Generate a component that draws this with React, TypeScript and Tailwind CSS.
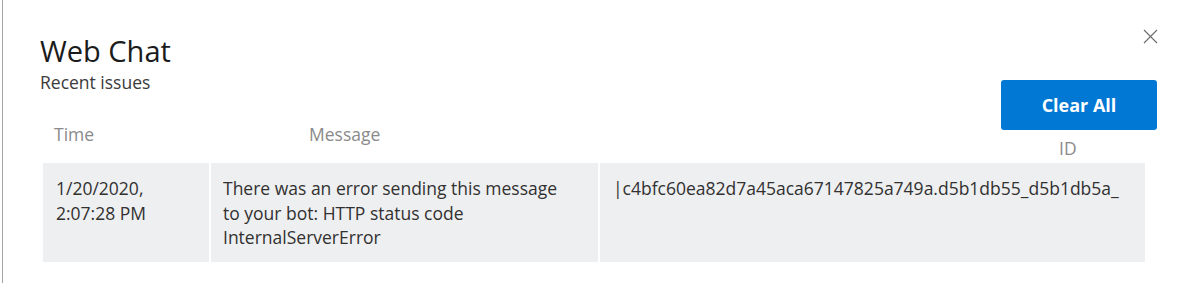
import React from "react";

type Issue = {
  time: string[];
  message: string;
  id: string;
};

const issues: Issue[] = [
  {
    time: ["1/20/2020,", "2:07:28 PM"],
    message:
      "There was an error sending this message to your bot: HTTP status code InternalServerError",
    id: "|c4bfc60ea82d7a45aca67147825a749a.d5b1db55_d5b1db5a_",
  },
];

const CloseIcon: React.FC = () => (
  <svg width="15" height="15" viewBox="0 0 15 15" fill="none">
    <path d="M1 1L14 14M14 1L1 14" stroke="#6b6b6b" strokeWidth="1.1" />
  </svg>
);

const App: React.FC = () => {
  return (
    <div
      className="w-[1191px] h-[283px] bg-white pl-[2px] overflow-hidden"
      style={{ fontFamily: '"Open Sans", "Noto Sans", sans-serif' }}
    >
      <div className="relative h-full border-l border-[#a3a3a3]">
        <button className="absolute left-[1140px] top-[29px] w-[15px] h-[15px] flex items-center justify-center">
          <CloseIcon />
        </button>

        <div className="flex items-start justify-between pr-[34px]">
          <div className="flex flex-col pl-[37px] pt-[33px]">
            <h1 className="text-[29px] leading-[36px] text-[#1b1b1b]">
              Web Chat
            </h1>
            <p className="mt-[1px] text-[17.5px] leading-[24px] text-[#3b3b3b]">
              Recent issues
            </p>
            <div className="mt-[28px] flex text-[17.5px] leading-[24px] text-[#8a8a8a]">
              <span className="pl-[14px] w-[269px]">Time</span>
              <span>Message</span>
            </div>
          </div>

          <div className="flex flex-col items-start pt-[80px]">
            <button className="w-[156px] h-[50px] rounded-[3px] bg-[#0078d4] text-white text-[18px] font-bold">
              Clear All
            </button>
            <span className="mt-[6px] pl-[58px] text-[17.5px] leading-[24px] text-[#8a8a8a]">
              ID
            </span>
          </div>
        </div>

        <div className="mt-[3px] ml-[40px] w-[1102px] flex flex-col gap-[2px]">
          {issues.map((issue) => (
            <div
              key={issue.id}
              className="flex gap-[2px] h-[99px] text-[17.5px] leading-[24.5px] text-[#323130]"
            >
              <div className="w-[166px] bg-[#eeeff1] pl-[13px] pr-3 pt-[13px]">
                {issue.time.map((line) => (
                  <div key={line}>{line}</div>
                ))}
              </div>
              <div className="w-[387px] bg-[#eeeff1] pl-3 pr-[24px] pt-[13px]">
                {issue.message}
              </div>
              <div className="flex-1 bg-[#eeeff1] pl-[13px] pr-2 pt-[13px] overflow-hidden whitespace-nowrap">
                {issue.id}
              </div>
            </div>
          ))}
        </div>
      </div>
    </div>
  );
};

export default App;
